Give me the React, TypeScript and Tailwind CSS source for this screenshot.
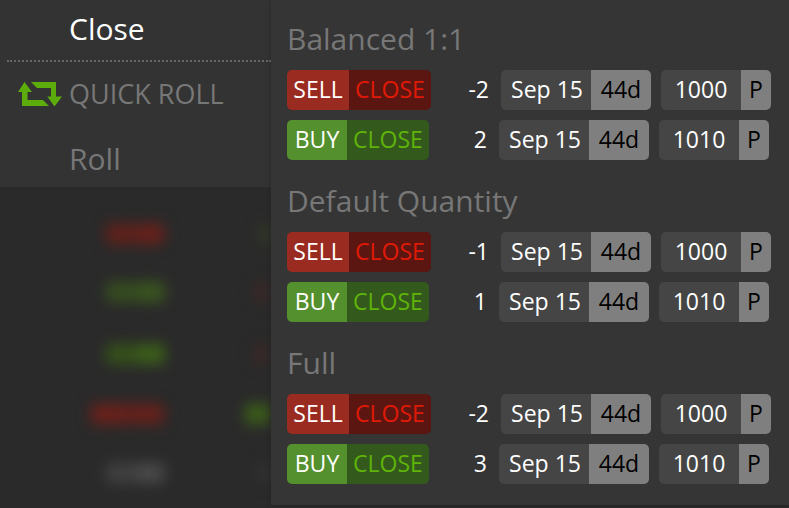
const FONT = "font-['Open_Sans',sans-serif]";

type Leg = { side: "SELL" | "BUY"; qty: number; strike: string };
type Group = { title: string; legs: Leg[] };

const groups: Group[] = [
  {
    title: "Balanced 1:1",
    legs: [
      { side: "SELL", qty: -2, strike: "1000" },
      { side: "BUY", qty: 2, strike: "1010" },
    ],
  },
  {
    title: "Default Quantity",
    legs: [
      { side: "SELL", qty: -1, strike: "1000" },
      { side: "BUY", qty: 1, strike: "1010" },
    ],
  },
  {
    title: "Full",
    legs: [
      { side: "SELL", qty: -2, strike: "1000" },
      { side: "BUY", qty: 3, strike: "1010" },
    ],
  },
];

const blurred = [
  { gap: "mt-[37px]", a: "ml-[106px] w-[29px] bg-[#62201a]", b: "ml-[1px] w-[29px] bg-[#6a201a]", c: "ml-[95px] w-[12px] bg-[#303a26]" },
  { gap: "mt-[38px]", a: "ml-[106px] w-[29px] bg-[#364e1f]", b: "ml-[1px] w-[29px] bg-[#3a561f]", c: "ml-[89px] w-[14px] bg-[#3b2826]" },
  { gap: "mt-[42px]", a: "ml-[106px] w-[29px] bg-[#365219]", b: "ml-[1px] w-[29px] bg-[#3c6019]", c: "ml-[89px] w-[14px] bg-[#3b2826]" },
  { gap: "mt-[40px]", a: "ml-[91px] w-[36px] bg-[#6c201a]", b: "ml-[1px] w-[36px] bg-[#68201a]", c: "ml-[81px] w-[25px] bg-[#3c5e19]" },
  { gap: "mt-[39px]", a: "ml-[106px] w-[29px] bg-[#414141]", b: "ml-[1px] w-[29px] bg-[#4a4a4a]", c: "ml-[95px] w-[12px] bg-[#323232]" },
];

function RollIcon() {
  return (
    <svg width="44" height="25" viewBox="0 0 44 25" className="shrink-0" fill="#5cad0c">
      <path d="M6.5 0 L14 10 H9.5 V18 H25 L31 24 H4 V10 H0 Z" />
      <path d="M13 0 H38 V14.5 H44 L36.5 24.5 L29.3 14.5 H33 V6 H19 Z" />
    </svg>
  );
}

function LegRow({ leg }: { leg: Leg }) {
  const sell = leg.side === "SELL";
  return (
    <div className="flex h-10 items-center text-[23px] leading-none">
      <div className="flex h-full overflow-hidden rounded-[5px]">
        <span
          className={
            sell
              ? "flex w-[62px] items-center justify-center bg-[#992b20] pb-[2px] text-white"
              : "flex w-[60px] items-center justify-center bg-[#54902d] pb-[2px] text-white"
          }
        >
          {leg.side}
        </span>
        <span
          className={
            sell
              ? "flex w-[82px] items-center justify-center bg-[#5b1612] pb-[2px] text-[#e01a06]"
              : "flex w-[82px] items-center justify-center bg-[#335a1c] pb-[2px] text-[#5fb30a]"
          }
        >
          CLOSE
        </span>
      </div>
      <span className="w-[58px] pb-[2px] text-right text-white">{leg.qty}</span>
      <div className="ml-3 flex h-full overflow-hidden rounded-[5px]">
        <span className="flex w-[90px] items-center justify-center bg-[#454545] pb-[2px] pl-[2px] text-white">
          Sep 15
        </span>
        <span className="flex w-[60px] items-center justify-center bg-[#7f7f7f] pb-[2px] text-black">
          44d
        </span>
      </div>
      <div className="ml-2.5 flex h-full overflow-hidden rounded-[5px]">
        <span className="flex w-[80px] items-center justify-center bg-[#454545] pb-[2px] text-white">
          {leg.strike}
        </span>
        <span className="flex w-[30px] items-center justify-center bg-[#7f7f7f] pb-[2px] text-black">
          P
        </span>
      </div>
    </div>
  );
}

export default function App() {
  return (
    <div className={`${FONT} flex h-[508px] w-[789px] overflow-hidden bg-[#2a2a2a]`}>
      {/* Menu and the blurred table behind it */}
      <div className="w-[271px] shrink-0 overflow-hidden">
        <div className="h-[187px] bg-[#333333]">
          <div className="flex h-[60px] items-center pb-[3px] pl-[69px] text-[30px] text-white">
            Close
          </div>
          <div className="ml-[7px] border-t-2 border-dotted border-[#666666]" />
          <div className="mt-[14px] flex h-[36px] items-center pl-[18px] text-[27px] text-[#777777]">
            <RollIcon />
            <span className="ml-[7px]">QUICK ROLL</span>
          </div>
          <div className="mt-[29px] pl-[69px] text-[30px] leading-[36px] text-[#777777]">
            Roll
          </div>
        </div>
        {blurred.map((row, i) => (
          <div key={i} className={`flex h-[20px] blur-[7px] ${row.gap}`}>
            <div className={`h-full ${row.a}`} />
            <div className={`h-full ${row.b}`} />
            <div className={`h-full ${row.c}`} />
          </div>
        ))}
      </div>

      {/* Roll options */}
      <div className="z-10 mb-[3px] flex-1 bg-[#353535] pl-[16px] pt-[18px] shadow-[0_0_6px_rgba(0,0,0,0.2)]">
        {groups.map((group) => (
          <div key={group.title} className="mb-5">
            <h3 className="h-[42px] text-[30px] leading-[42px] text-[#777777]">
              {group.title}
            </h3>
            <div className="mt-[10px] flex flex-col gap-2.5">
              {group.legs.map((leg) => (
                <LegRow key={leg.side} leg={leg} />
              ))}
            </div>
          </div>
        ))}
      </div>
    </div>
  );
}
